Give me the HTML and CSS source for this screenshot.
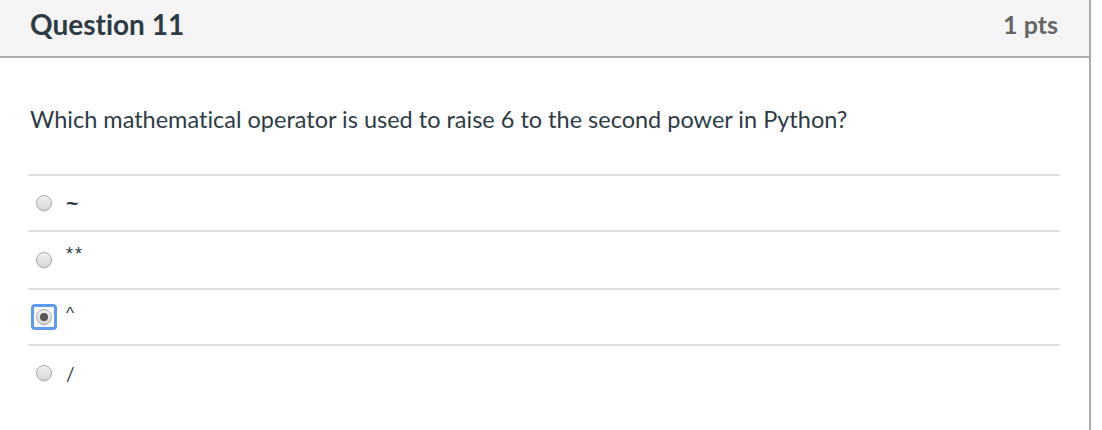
FILE: index.html
```html
<!DOCTYPE html>
<html>
<head>
<meta charset="utf-8">
<link rel="stylesheet" href="styles.css">
</head>
<body>
<div class="card">
  <div class="header">
    <div class="title">Question 11</div>
    <div class="pts">1 pts</div>
  </div>
  <div class="body">
    <p class="question">Which mathematical operator is used to raise 6 to the second power in Python?</p>
    <div class="answers">
      <div class="answer"><span class="radio"></span><span class="label tilde">~</span></div>
      <div class="answer"><span class="radio"></span><span class="label up">**</span></div>
      <div class="answer"><span class="focus"><span class="radio checked"></span></span><span class="label">^</span></div>
      <div class="answer"><span class="radio"></span><span class="label slash">/</span></div>
    </div>
  </div>
</div>
</body>
</html>
```
FILE: styles.css
```css
html, body { margin: 0; padding: 0; background: #fff; }
body { font-family: Lato, "Open Sans", sans-serif; color: #2d3b45; width: 1102px; height: 430px; overflow: hidden; font-variant-ligatures: none; }
.card { width: 1089px; height: 430px; border-right: 2px solid #aaa; background: #fff; }
.header { height: 56px; background: #f5f5f5; border-bottom: 2px solid #aaa; display: flex; align-items: center; justify-content: space-between; padding: 0 31px 0 30px; box-sizing: content-box; }
.title { font-size: 28px; font-weight: 700; color: #2d3b45; margin-top: -9px; }
.pts { font-size: 25px; font-weight: 700; color: #666; margin-top: -9px; }
.body { padding: 0 29px 0 28px; }
.question { margin: 0; padding: 47px 0 41px 2px; font-size: 23.5px; line-height: 28px; color: #2d3b45; }
.answer { border-top: 2px solid #ddd; height: 54px; display: flex; align-items: center; padding-left: 8px; }
.answer:nth-child(2) { height: 56px; }
.radio { width: 14px; height: 14px; border-radius: 50%; border: 1px solid #aaa; background: linear-gradient(#f0f0f0, #d8d8d8); box-shadow: 0 1px 1px rgba(0,0,0,0.12); display: inline-block; position: relative; flex: none; }
.radio.checked::after { content: ""; position: absolute; left: 3px; top: 3px; width: 8px; height: 8px; border-radius: 50%; background: #555; }
.focus { display: inline-flex; padding: 2px; margin: -5px; border: 3px solid #5e9af2; border-radius: 4px; background: #fff; }
.answer .label { margin-left: 14px; font-family: "Liberation Sans", Arial, sans-serif; font-size: 17px; color: #2d3b45; }
.answer .label.tilde { font-size: 21px; font-weight: 700; }
.label.up { margin-top: -12px; letter-spacing: 2px; font-size: 18px; }
.answer .label.slash { font-family: Lato, sans-serif; font-size: 19px; }
.answer:nth-child(3) .label { margin-left: 14px; margin-top: -6px; }
```
